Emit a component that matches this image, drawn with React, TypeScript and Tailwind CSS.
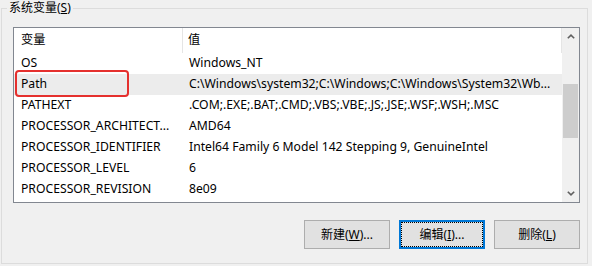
import React from "react";

const rows: { name: string; value: string; selected?: boolean }[] = [
  { name: "OS", value: "Windows_NT" },
  { name: "Path", value: "C:\\Windows\\system32;C:\\Windows;C:\\Windows\\System32\\Wb...", selected: true },
  { name: "PATHEXT", value: ".COM;.EXE;.BAT;.CMD;.VBS;.VBE;.JS;.JSE;.WSF;.WSH;.MSC" },
  { name: "PROCESSOR_ARCHITECT...", value: "AMD64" },
  { name: "PROCESSOR_IDENTIFIER", value: "Intel64 Family 6 Model 142 Stepping 9, GenuineIntel" },
  { name: "PROCESSOR_LEVEL", value: "6" },
  { name: "PROCESSOR_REVISION", value: "8e09" },
];

const font = { fontFamily: '"Segoe UI", "Noto Sans", "Noto Sans CJK SC", sans-serif' };

function Up() {
  return (
    <svg width="8" height="5" viewBox="0 0 8 5">
      <path d="M0.8 4.3 L4 1.2 L7.2 4.3" fill="none" stroke="#606060" strokeWidth="1.6" />
    </svg>
  );
}
function Down() {
  return (
    <svg width="8" height="5" viewBox="0 0 8 5">
      <path d="M0.8 0.7 L4 3.8 L7.2 0.7" fill="none" stroke="#606060" strokeWidth="1.6" />
    </svg>
  );
}

export default function App() {
  return (
    <div
      className="w-[592px] h-[266px] bg-[#f0f0f0] pl-[1px] text-[12px] text-black overflow-hidden"
      style={font}
    >
      <fieldset className="w-[587px] h-[264px] border border-[#dcdcdc] m-0 pl-[11px] pr-0">
        <legend className="-ml-[6px] px-[2px] leading-[16px] h-[16px]">
          系统变量(<span className="underline">S</span>)
        </legend>
        <div className="mt-[11px] w-[567px] h-[176px] border border-[#828790] bg-white flex text-[12.2px]">
          <div className="relative flex-1 flex flex-col">
            <div className="flex h-[25px] items-center">
              <div className="w-[169px] h-full flex items-center pl-[7px] border-r border-[#e5e5e5]">变量</div>
              <div className="flex-1 h-full flex items-center pl-[5px] border-r border-[#e5e5e5]">值</div>
            </div>
            {rows.map((r) => (
              <div
                key={r.name}
                className={`flex h-[21px] items-center whitespace-nowrap ${r.selected ? "bg-[#ececec]" : ""}`}
              >
                <div className="w-[169px] pl-[7px] overflow-hidden">{r.name}</div>
                <div className="flex-1 pl-[6px] overflow-hidden">{r.value}</div>
              </div>
            ))}
            <div className="absolute left-[1px] top-[42px] w-[114px] h-[27px] border-2 border-[#e5302e] rounded-[4px]" />
          </div>
          <div className="w-[17px] bg-[#f0f0f0] flex flex-col">
            <div className="h-[17px] flex items-center justify-center">
              <Up />
            </div>
            <div className="h-[39px]" />
            <div className="h-[54px] mx-[1px] bg-[#cdcdcd]" />
            <div className="flex-1" />
            <div className="h-[17px] flex items-center justify-center">
              <Down />
            </div>
          </div>
        </div>
        <div className="mt-[17px] w-[567px] flex justify-end gap-[9px]">
          <button className="w-[86px] h-[29px] border border-[#adadad] bg-[#e1e1e1] flex items-center justify-center">
            新建(<span className="underline">W</span>)...
          </button>
          <button className="w-[86px] h-[29px] border-2 border-[#0078d7] bg-[#e1e1e1] p-0">
            <div className="w-full h-full border border-dotted border-black flex items-center justify-center">
              编辑(<span className="underline">I</span>)...
            </div>
          </button>
          <button className="w-[86px] h-[29px] border border-[#adadad] bg-[#e1e1e1] flex items-center justify-center">
            删除(<span className="underline">L</span>)
          </button>
        </div>
      </fieldset>
    </div>
  );
}
